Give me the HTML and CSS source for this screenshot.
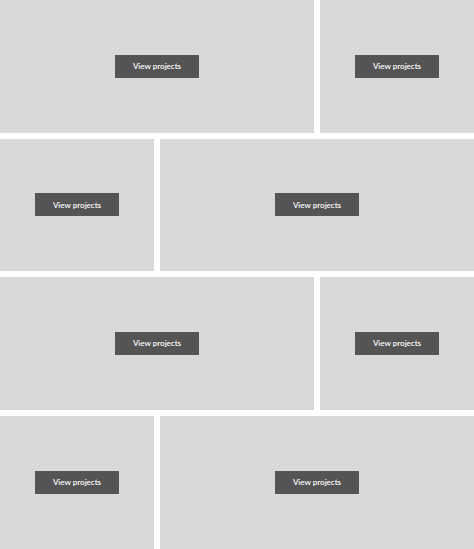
FILE: index.html
```html
<!DOCTYPE html>
<html lang="en">
<head>
<meta charset="utf-8">
<title>Projects</title>
<link rel="stylesheet" href="styles.css">
</head>
<body>
<main class="gallery">
  <section class="row row-wide-first">
    <div class="tile"><a class="btn" href="#">View projects</a></div>
    <div class="tile"><a class="btn" href="#">View projects</a></div>
  </section>
  <section class="row row-narrow-first">
    <div class="tile"><a class="btn" href="#">View projects</a></div>
    <div class="tile"><a class="btn" href="#">View projects</a></div>
  </section>
  <section class="row row-wide-first">
    <div class="tile"><a class="btn" href="#">View projects</a></div>
    <div class="tile"><a class="btn" href="#">View projects</a></div>
  </section>
  <section class="row row-narrow-first">
    <div class="tile"><a class="btn" href="#">View projects</a></div>
    <div class="tile"><a class="btn" href="#">View projects</a></div>
  </section>
</main>
</body>
</html>
```

FILE: styles.css
```css
html, body {
  margin: 0;
  padding: 0;
  background: #ffffff;
}

.gallery {
  width: 474px;
  height: 549px;
  display: grid;
  grid-template-rows: 133px 132px 133px 133px;
  row-gap: 6px;
}

.row {
  display: grid;
  column-gap: 6px;
}

.row-wide-first {
  grid-template-columns: 314px 154px;
}

.row-narrow-first {
  grid-template-columns: 154px 314px;
}

.tile {
  background: #d9d9d9;
  display: flex;
  align-items: center;
  justify-content: center;
}

.btn {
  display: flex;
  align-items: center;
  justify-content: center;
  width: 84px;
  height: 23px;
  background: #545454;
  color: #ffffff;
  font-family: Lato, "Open Sans", sans-serif;
  font-size: 8px;
  font-weight: 600;
  text-decoration: none;
  margin-top: -1px;
}
```
